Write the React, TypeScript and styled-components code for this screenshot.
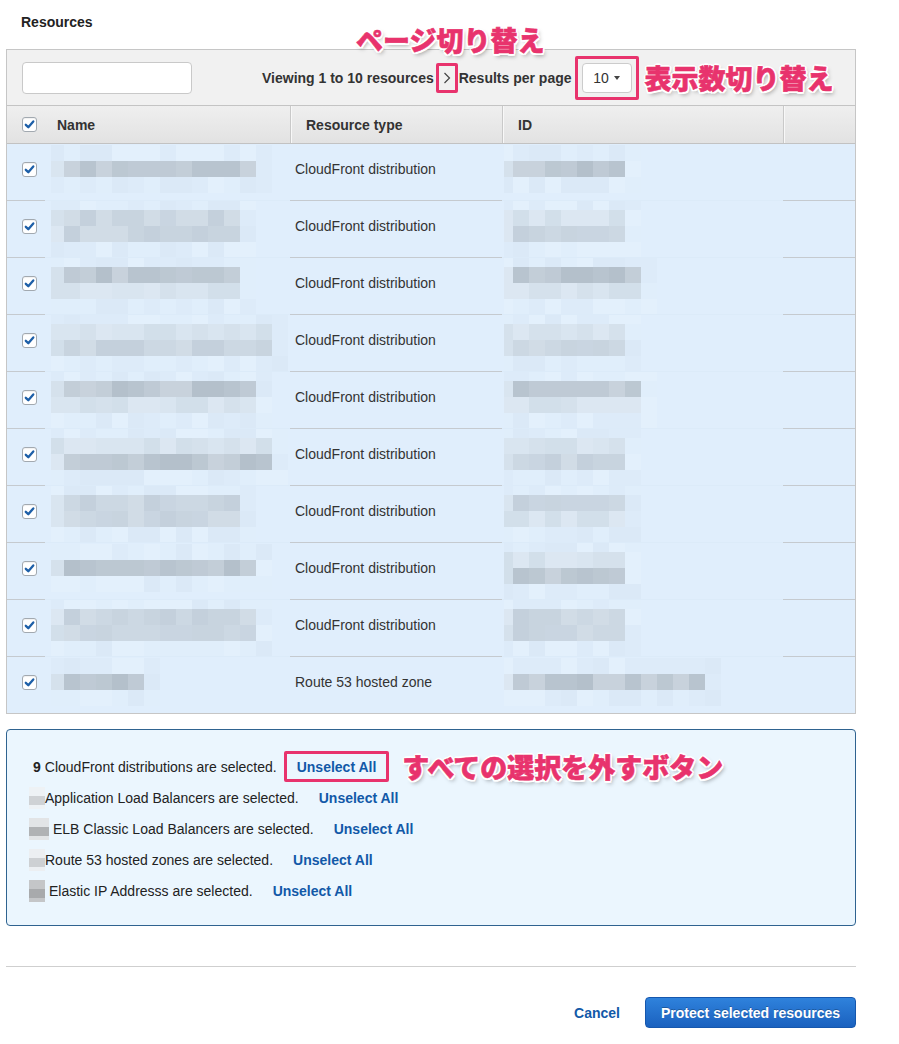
import React from "react";
import styled, { createGlobalStyle, css } from "styled-components";

const GlobalStyle = createGlobalStyle`
  html, body {
    margin: 0;
    padding: 0;
    background: #ffffff;
  }
  body {
    font-family: "Liberation Sans", Arial, Helvetica, sans-serif;
    font-size: 14px;
    color: #333333;
  }
`;

const PINK = "#e8336d";
const LINK = "#1259a8";

type Tone = "dark" | "mid" | "light" | "faint";
type Line = { tone: Tone; n: number };

const palettes: Record<Tone, string[]> = {
  dark: ["#b8c4cf", "#bfcad5", "#c3ced8", "#b4c0cb", "#c8d2dc", "#bcc8d2"],
  mid: ["#c8d4df", "#ccd8e3", "#c4d0dc", "#d1dce6", "#c9d5e1"],
  light: ["#d5e1ec", "#d9e5f0", "#dce7f2", "#d2dfea"],
  faint: ["#ddebf9", "#e0eefb", "#e3f0fc", "#dbe9f7"],
};

// deterministic shade picker so the mosaic looks the same every render
const shade = (tone: Tone, seed: number) => {
  const p = palettes[tone];
  const h = Math.abs(Math.sin(seed * 12.9898) * 43758.5453);
  return p[Math.floor(h) % p.length];
};

const Page = styled.div`
  position: relative;
  width: 850px;
  padding: 0 43px 0 6px;
`;

const Title = styled.div`
  font-weight: bold;
  font-size: 14px;
  line-height: 18px;
  color: #222;
  padding: 13px 0 0 15px;
  margin-bottom: 18px;
`;

const Note = styled.span<{ $gap?: number }>`
  font-family: "Noto Sans CJK JP", "Liberation Sans", sans-serif;
  font-weight: 900;
  font-size: 27px;
  line-height: 30px;
  color: ${PINK};
  white-space: nowrap;
  margin-left: ${(p) => p.$gap ?? 0}px;
  -webkit-text-stroke: 0.6px ${PINK};
  text-shadow: 2px 0 0 #fff, -2px 0 0 #fff, 0 2px 0 #fff, 0 -2px 0 #fff, 1.5px 1.5px 0 #fff,
    -1.5px -1.5px 0 #fff, 1.5px -1.5px 0 #fff, -1.5px 1.5px 0 #fff, 2px 3px 4px rgba(0, 0, 0, 0.35);
`;

const FloatingNote = styled(Note)`
  position: absolute;
  left: 356px;
  top: 25px;
`;

const Panel = styled.div`
  border: 1px solid #c6c6c6;
`;

const Toolbar = styled.div`
  height: 55px;
  background: #f1f1f1;
  border-bottom: 1px solid #c4c4c4;
  display: flex;
  align-items: center;
  padding: 0 15px;
`;

const Search = styled.input`
  width: 170px;
  height: 32px;
  box-sizing: border-box;
  background: #fff;
  border: 1px solid #c9c9c9;
  border-radius: 4px;
  outline: none;
`;

const Pager = styled.div`
  display: flex;
  align-items: center;
  margin-left: 70px;
  font-weight: bold;
  color: #333;
`;

const PinkBox = styled.span<{ $pad?: string }>`
  display: inline-flex;
  align-items: center;
  justify-content: center;
  border: 3px solid ${PINK};
  border-radius: 2px;
  padding: ${(p) => p.$pad ?? "0"};
  box-sizing: border-box;
`;

const Chevron = styled(PinkBox)`
  width: 22px;
  height: 30px;
  margin: 0 1px 0 2px;
`;

const PerPage = styled(PinkBox)`
  margin-left: 3px;
`;

const Select = styled.div`
  width: 50px;
  height: 30px;
  box-sizing: border-box;
  background: #fff;
  border: 1px solid #cccccc;
  border-radius: 4px;
  display: flex;
  align-items: center;
  justify-content: center;
  gap: 5px;
  font-weight: normal;
  font-size: 14px;
  color: #333;
`;

const Caret = styled.span`
  width: 0;
  height: 0;
  border-left: 3.5px solid transparent;
  border-right: 3.5px solid transparent;
  border-top: 4px solid #444;
`;

const cols = css`
  display: grid;
  grid-template-columns: 38px 245px 212px 281px 1fr;
`;

const HeaderRow = styled.div`
  ${cols};
  height: 38px;
  box-sizing: border-box;
  background: linear-gradient(#efefef, #e2e2e2);
  border-bottom: 1px solid #c2c2c2;
`;

const HeadCell = styled.div<{ $pad?: number; $divider?: boolean }>`
  display: flex;
  align-items: center;
  padding-left: ${(p) => p.$pad ?? 0}px;
  font-weight: bold;
  color: #333;
  ${(p) =>
    p.$divider &&
    css`
      border-left: 1px solid #c9c9c9;
      box-shadow: inset 1px 0 0 #f8f8f8;
    `}
`;

const Row = styled.div<{ $last?: boolean }>`
  ${cols};
  grid-template-rows: ${(p) => (p.$last ? 56 : 57)}px;
  background: #e0eefc;
`;

const Cell = styled.div<{ $pad?: number; $last?: boolean; $hidden?: boolean }>`
  display: flex;
  align-items: center;
  min-height: 0;
  overflow: hidden;
  box-sizing: border-box;
  padding-left: ${(p) => p.$pad ?? 0}px;
  padding-bottom: ${(p) => (p.$hidden ? 0 : 6)}px;
  border-bottom: ${(p) => (p.$last ? "none" : `1px solid ${p.$hidden ? "#dcebf9" : "#c5cacf"}`)};
  color: #333;
`;

const Box = styled.span`
  width: 15px;
  height: 15px;
  box-sizing: border-box;
  background: #fff;
  border: 1px solid #a2a9b0;
  border-radius: 3px;
  display: inline-flex;
  align-items: center;
  justify-content: center;
  box-shadow: inset 0 1px 1px rgba(0, 0, 0, 0.06);
`;

const Checkbox = () => (
  <Box>
    <svg width="11" height="11" viewBox="0 0 11 11">
      <path
        d="M1.8 5.8 L4.3 8.2 L9.3 2.4"
        fill="none"
        stroke="#1d5fa8"
        strokeWidth="2.3"
        strokeLinecap="round"
        strokeLinejoin="round"
      />
    </svg>
  </Box>
);

const MosaicWrap = styled.div<{ $w: number }>`
  width: ${(p) => p.$w}px;
  height: 100%;
  display: flex;
  flex-direction: column;
  justify-content: center;
  padding-bottom: 6px;
  box-sizing: border-box;
`;

const MosaicLine = styled.div`
  display: flex;
  height: 16px;
  flex: none;
`;

const Block = styled.span<{ $w: number }>`
  width: ${(p) => p.$w}px;
  height: 16px;
  flex: none;
`;

const Mosaic = ({ lines, width, lead, seed }: { lines: Line[]; width: number; lead: number; seed: number }) => {
  const n = Math.max(...lines.map((l) => l.n));
  const all: Line[] = [{ tone: "faint", n }, ...lines, { tone: "faint", n }];
  return (
    <MosaicWrap $w={width}>
      {all.map((line, li) => (
        <MosaicLine key={li}>
          <Block $w={lead} style={{ background: shade(line.tone === "faint" ? "faint" : "light", seed + li * 7) }} />
          {Array.from({ length: line.n }).map((_, bi) => (
            <Block key={bi} $w={16} style={{ background: shade(line.tone, seed * 31 + li * 17 + bi) }} />
          ))}
          <Block $w={16} style={{ background: shade("faint", seed + li * 3 + 5) }} />
        </MosaicLine>
      ))}
    </MosaicWrap>
  );
};

type Resource = { name: Line[]; type: string; id: Line[] };

const resources: Resource[] = [
  { name: [{ tone: "dark", n: 12 }], type: "CloudFront distribution", id: [{ tone: "dark", n: 7 }] },
  {
    name: [{ tone: "mid", n: 11 }, { tone: "mid", n: 11 }],
    type: "CloudFront distribution",
    id: [{ tone: "light", n: 7 }, { tone: "mid", n: 7 }],
  },
  {
    name: [{ tone: "dark", n: 11 }, { tone: "light", n: 11 }],
    type: "CloudFront distribution",
    id: [{ tone: "dark", n: 8 }, { tone: "light", n: 8 }],
  },
  {
    name: [{ tone: "light", n: 13 }, { tone: "mid", n: 13 }],
    type: "CloudFront distribution",
    id: [{ tone: "light", n: 7 }, { tone: "mid", n: 7 }],
  },
  {
    name: [{ tone: "dark", n: 12 }, { tone: "light", n: 12 }],
    type: "CloudFront distribution",
    id: [{ tone: "dark", n: 8 }, { tone: "light", n: 8 }],
  },
  {
    name: [{ tone: "light", n: 13 }, { tone: "dark", n: 13 }],
    type: "CloudFront distribution",
    id: [{ tone: "light", n: 7 }, { tone: "mid", n: 7 }],
  },
  {
    name: [{ tone: "mid", n: 11 }, { tone: "mid", n: 11 }],
    type: "CloudFront distribution",
    id: [{ tone: "mid", n: 7 }, { tone: "light", n: 7 }],
  },
  {
    name: [{ tone: "dark", n: 12 }],
    type: "CloudFront distribution",
    id: [{ tone: "light", n: 7 }, { tone: "dark", n: 7 }],
  },
  {
    name: [{ tone: "mid", n: 12 }, { tone: "mid", n: 12 }],
    type: "CloudFront distribution",
    id: [{ tone: "mid", n: 7 }, { tone: "mid", n: 7 }],
  },
  { name: [{ tone: "dark", n: 5 }], type: "Route 53 hosted zone", id: [{ tone: "dark", n: 12 }] },
];

const Selection = styled.div`
  margin-top: 15px;
  background: #ebf6fe;
  border: 1px solid #2f6390;
  border-radius: 4px;
  padding: 21px 0 19px 22px;
`;

const SelLine = styled.div`
  display: flex;
  align-items: center;
  height: 31px;
  color: #222;
`;

const Count = styled.span`
  font-weight: bold;
  padding-left: 4px;
  margin-right: 4px;
`;

const Mini = styled.span<{ $w: number; $top: string; $bottom: string; $gap?: number }>`
  display: inline-flex;
  width: ${(p) => p.$w}px;
  height: 22px;
  margin-right: ${(p) => p.$gap ?? 0}px;
  background: linear-gradient(${(p) => p.$top} 0 40%, ${(p) => p.$bottom} 40% 80%, ${(p) => p.$top} 80% 100%);
`;

const LinkText = styled.a`
  color: ${LINK};
  font-weight: bold;
  text-decoration: none;
  cursor: pointer;
`;

const UnselectLink = styled(LinkText)`
  margin-left: 20px;
`;

const BoxedLink = styled(PinkBox)`
  margin-left: 7px;
  height: 31px;
`;

const Rule = styled.hr`
  margin: 40px 0 0;
  border: none;
  border-top: 1px solid #cfcfcf;
`;

const Footer = styled.div`
  margin-top: 30px;
  display: flex;
  justify-content: flex-end;
  align-items: center;
  gap: 25px;
`;

const PrimaryButton = styled.button`
  height: 31px;
  padding: 0 15px;
  font-family: inherit;
  font-size: 14px;
  font-weight: bold;
  color: #fff;
  text-shadow: 0 -1px 0 rgba(0, 0, 0, 0.25);
  background: linear-gradient(#2f82dc, #1a61bf);
  border: 1px solid #1657ad;
  border-radius: 4px;
  cursor: pointer;
`;

const others = [
  { text: "Application Load Balancers are selected.", w: 16, top: "#eef2f5", bottom: "#cfd2d5", gap: 0 },
  { text: "ELB Classic Load Balancers are selected.", w: 20, top: "#e2e4e6", bottom: "#b0b2b4", gap: 4 },
  { text: "Route 53 hosted zones are selected.", w: 16, top: "#eceff2", bottom: "#cdd0d3", gap: 0 },
  { text: "Elastic IP Addresss are selected.", w: 16, top: "#c4c6c8", bottom: "#a8aaac", gap: 4 },
];

export default function App() {
  return (
    <>
      <GlobalStyle />
      <Page>
        <Title>Resources</Title>
        <FloatingNote>ページ切り替え</FloatingNote>

        <Panel>
          <Toolbar>
            <Search />
            <Pager>
              Viewing 1 to 10 resources
              <Chevron>
                <svg width="8" height="12" viewBox="0 0 8 12">
                  <path d="M1.5 1 L6.5 6 L1.5 11" fill="none" stroke="#444" strokeWidth="1.2" />
                </svg>
              </Chevron>
              Results per page
              <PerPage $pad="4px">
                <Select>
                  10 <Caret />
                </Select>
              </PerPage>
              <Note $gap={6}>表示数切り替え</Note>
            </Pager>
          </Toolbar>

          <HeaderRow>
            <HeadCell $pad={15}>
              <Checkbox />
            </HeadCell>
            <HeadCell $pad={12}>Name</HeadCell>
            <HeadCell $pad={15} $divider>
              Resource type
            </HeadCell>
            <HeadCell $pad={15} $divider>
              ID
            </HeadCell>
            <HeadCell $divider />
          </HeaderRow>

          {resources.map((r, i) => {
            const last = i === resources.length - 1;
            return (
              <Row key={i} $last={last}>
                <Cell $pad={15} $last={last}>
                  <Checkbox />
                </Cell>
                <Cell $pad={6} $last={last} $hidden>
                  <Mosaic lines={r.name} width={232} lead={13} seed={i + 1} />
                </Cell>
                <Cell $pad={5} $last={last}>
                  {r.type}
                </Cell>
                <Cell $pad={2} $last={last} $hidden>
                  <Mosaic lines={r.id} width={276} lead={9} seed={i + 40} />
                </Cell>
                <Cell $last={last} />
              </Row>
            );
          })}
        </Panel>

        <Selection>
          <SelLine>
            <Count>9</Count>CloudFront distributions are selected.
            <BoxedLink $pad="0 10px">
              <LinkText>Unselect All</LinkText>
            </BoxedLink>
            <Note $gap={13}>すべての選択を外すボタン</Note>
          </SelLine>
          {others.map((o) => (
            <SelLine key={o.text}>
              <Mini $w={o.w} $top={o.top} $bottom={o.bottom} $gap={o.gap} />
              {o.text}
              <UnselectLink>Unselect All</UnselectLink>
            </SelLine>
          ))}
        </Selection>

        <Rule />

        <Footer>
          <LinkText>Cancel</LinkText>
          <PrimaryButton>Protect selected resources</PrimaryButton>
        </Footer>
      </Page>
    </>
  );
}
